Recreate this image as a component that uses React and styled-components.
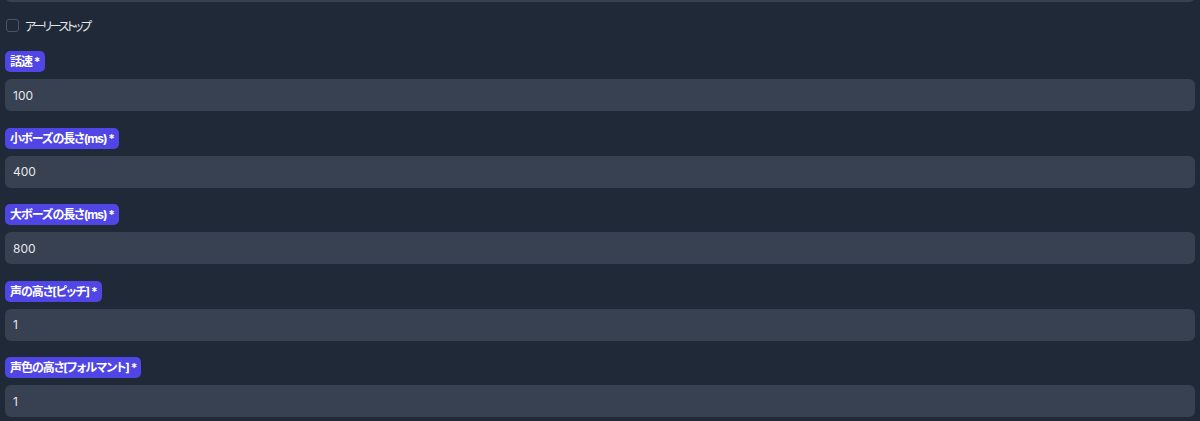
import React from "react";
import styled, { createGlobalStyle } from "styled-components";

const Global = createGlobalStyle`
  html, body { margin: 0; padding: 0; background: #1f2937; }
  body { font-family: Inter, "Noto Sans CJK JP", sans-serif; overflow: hidden; }
  * { box-sizing: border-box; }
`;

const Page = styled.div`
  width: 1200px;
  height: 421px;
  background: #1f2937;
  padding: 0 5px;
  overflow: hidden;
`;

const Input = styled.input`
  display: block;
  width: 100%;
  height: 32px;
  margin-top: ${(p) => p.$mt ?? 7}px;
  padding: 0 8px;
  border: none;
  border-radius: 6px;
  background: #374151;
  color: #e5e7eb;
  font-family: Inter, "Noto Sans CJK JP", sans-serif;
  font-size: 12px;
  outline: none;
`;

const CheckRow = styled.label`
  display: flex;
  align-items: center;
  gap: 6px;
  margin-top: 16px;
  padding-left: 1px;
  height: 14px;
  color: #e5e7eb;
  font-size: 12px;
  letter-spacing: -2.4px;
  font-feature-settings: "palt";
  font-family: "Noto Sans CJK JP", sans-serif;
`;

const Box = styled.span`
  flex: none;
  width: 13px;
  height: 13px;
  border: 1px solid #4b5563;
  border-radius: 3px;
  background: #1f2937;
`;

const Field = styled.div`
  display: flex;
  flex-direction: column;
  align-items: flex-start;
  margin-top: ${(p) => p.$mt}px;
`;

const Badge = styled.span`
  display: block;
  padding: 3px 5px;
  background: #4f46e5;
  color: #ffffff;
  border-radius: 5px;
  font-size: 12px;
  line-height: 15px;
  font-weight: 700;
  letter-spacing: -1px;
  font-feature-settings: "palt";
  font-family: Inter, "Noto Sans CJK JP", sans-serif;
`;

const fields = [
  { label: "話速", value: "100" },
  { label: "小ボーズの長さ(ms)", value: "400" },
  { label: "大ボーズの長さ(ms)", value: "800" },
  { label: "声の高さ[ピッチ]", value: "1" },
  { label: "声色の高さ[フォルマント]", value: "1" },
];

export default function App() {
  return (
    <Page>
      <Global />
      <Input $mt={-30} readOnly value="" />
      <CheckRow>
        <Box />
        アーリーストップ
      </CheckRow>
      {fields.map((f, i) => (
        <Field key={i} $mt={i === 0 ? 19 : 16.5}>
          <Badge>{f.label} *</Badge>
          <Input readOnly value={f.value} />
        </Field>
      ))}
    </Page>
  );
}
